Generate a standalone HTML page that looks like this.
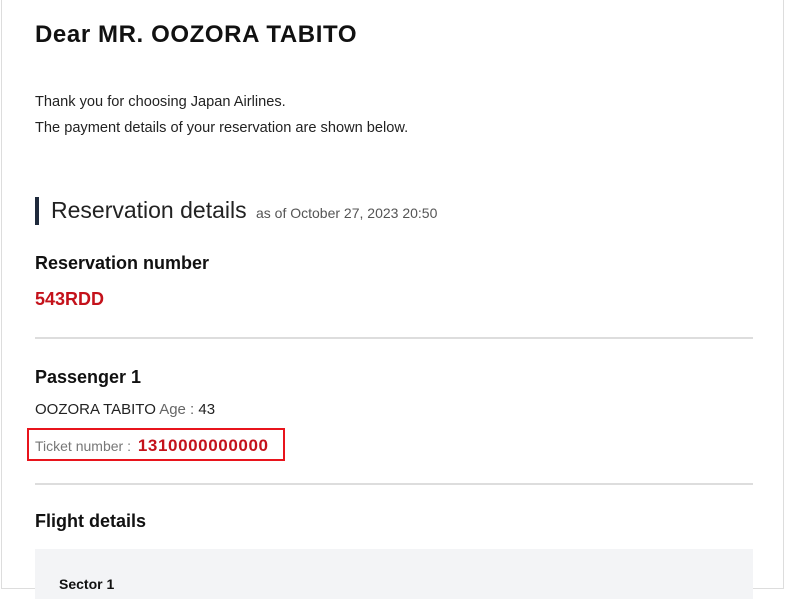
<!DOCTYPE html>
<html><head><meta charset="utf-8"><style>
html,body{margin:0;padding:0;background:#fff;}
body{width:785px;height:591px;position:relative;overflow:hidden;font-family:"Liberation Sans",Arial,sans-serif;color:#111;}
.frame{position:absolute;left:1px;top:0;width:781px;height:588px;border:1px solid #ddd;border-top:none;}
.a{position:absolute;white-space:nowrap;line-height:1;}
.hr{position:absolute;left:35px;width:718px;height:2px;background:#ddd;}
</style></head><body>
<div class="frame"></div>
<div class="a" style="left:35px;top:23px;font-size:24px;font-weight:bold;letter-spacing:0.6px;">Dear MR. OOZORA TABITO</div>
<div class="a" style="left:35px;top:95px;font-size:14.6px;color:#222;">Thank you for choosing Japan Airlines.</div>
<div class="a" style="left:35px;top:121px;font-size:14.6px;color:#222;">The payment details of your reservation are shown below.</div>
<div style="position:absolute;left:35px;top:197px;width:4px;height:28px;background:#1f2a3c;"></div>
<div class="a" style="left:51px;top:199px;font-size:23px;color:#222;">Reservation details <span style="font-size:14px;color:#555;margin-left:3px;">as of October 27, 2023 20:50</span></div>
<div class="a" style="left:35px;top:254px;font-size:18px;font-weight:bold;">Reservation number</div>
<div class="a" style="left:35px;top:290px;font-size:18px;font-weight:bold;color:#c4121b;">543RDD</div>
<div class="hr" style="top:337px;"></div>
<div class="a" style="left:35px;top:368px;font-size:18px;font-weight:bold;">Passenger 1</div>
<div class="a" style="left:35px;top:402px;font-size:15px;color:#222;">OOZORA TABITO <span style="color:#666">Age :</span> 43</div>
<div style="position:absolute;left:27px;top:428px;width:254px;height:29px;border:2px solid #e8141c;"></div>
<div class="a" style="left:35px;top:437px;font-size:14px;color:#777;">Ticket number : <span style="font-size:17px;font-weight:bold;color:#c4121b;margin-left:3px;letter-spacing:0.6px;">1310000000000</span></div>
<div class="hr" style="top:483px;"></div>
<div class="a" style="left:35px;top:512px;font-size:18px;font-weight:bold;">Flight details</div>
<div style="position:absolute;left:35px;top:549px;width:718px;height:50px;background:#f3f4f6;"></div>
<div class="a" style="left:59px;top:577px;font-size:14px;font-weight:bold;">Sector 1</div>
</body></html>
